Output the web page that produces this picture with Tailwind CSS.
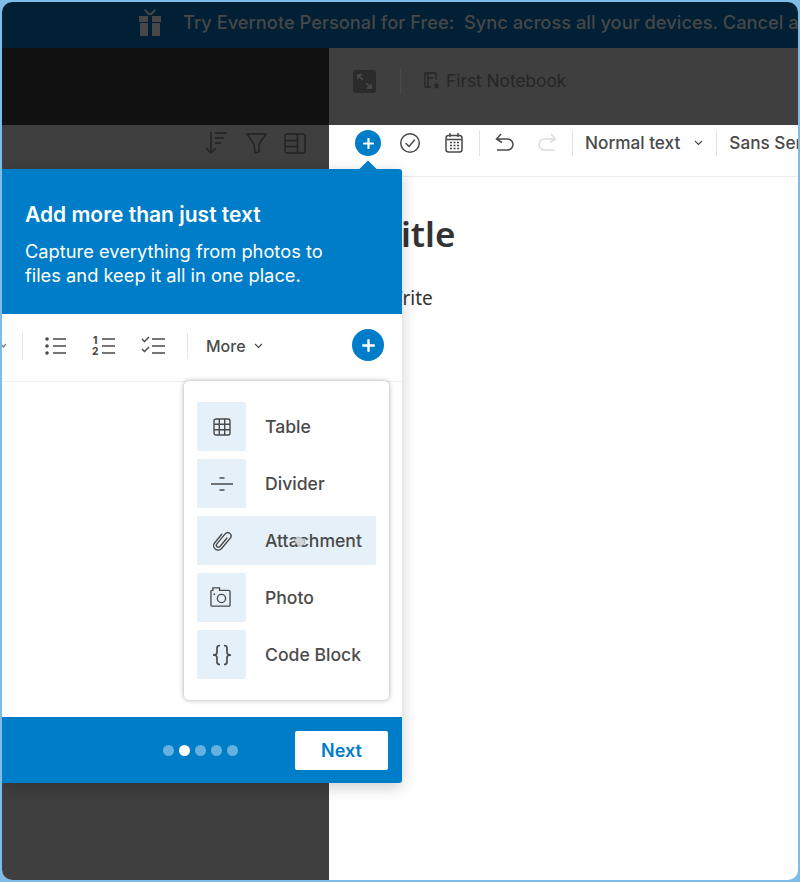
<!DOCTYPE html>
<html>
<head>
<meta charset="utf-8">
<script src="https://cdn.jsdelivr.net/npm/@tailwindcss/browser@4"></script>
</head>
<body class="bg-white">
<div class="w-[800px] h-[882px] bg-[#7fbde9] p-[2px] font-['Inter',sans-serif] overflow-hidden">
  <div class="relative w-full h-full rounded-[10px] overflow-hidden bg-white flex flex-col">
    <!-- banner -->
    <div class="h-[46px] shrink-0 bg-[#012035] flex items-center pl-[135px] pb-[4px] gap-[20px] whitespace-nowrap text-[#474747] text-[18.300px] font-medium">
      <svg class="w-[26px] h-[28px] shrink-0" viewBox="0 0 26 28" fill="#474747"><path d="M2 7h9v6H2zM15 7h9v6h-9zM3 14h8v13H4a1 1 0 0 1-1-1zM15 14h8v12a1 1 0 0 1-1 1h-7z"/><path d="M8 0l5 4.500L18 0l1 1.200L15 6h-4L7 1.200z"/></svg>
      <span class="whitespace-pre">Try Evernote Personal for Free:  Sync across all your devices. Cancel anytime.</span>
    </div>
    <div class="flex-1 flex min-h-0">
      <!-- left -->
      <div class="w-[327px] shrink-0 flex flex-col bg-[#3f3f3f]">
        <div class="h-[77px] bg-[#111111]"></div>
        <div class="h-[44px] flex items-center justify-end pr-[22px] pb-[8px] gap-[15px] text-[#232323]">
          <svg class="w-[26px] h-[26px]" viewBox="0 0 26 26" fill="none" stroke="currentColor" stroke-width="1.500"><path d="M8 2v21M3 18l5 5 5-5M12 3h12M12 8h9M12 13h6"/></svg>
          <svg class="w-[24px] h-[24px]" viewBox="0 0 24 24" fill="none" stroke="currentColor" stroke-width="1.500" stroke-linejoin="round"><path d="M3 3h19l-7 10v8l-4 1-1-9z"/></svg>
          <svg class="w-[24px] h-[24px]" viewBox="0 0 24 24" fill="none" stroke="currentColor" stroke-width="1.500"><rect x="2" y="3" width="20" height="19" rx="2"/><path d="M14.500 3v19M2 9.500h12.500M2 15.500h12.500"/></svg>
        </div>
        <div class="flex-1"></div>
      </div>
      <!-- right -->
      <div class="flex-1 flex flex-col min-w-0">
        <div class="h-[77px] bg-[#3f3f3f] flex items-center pl-[24px] pb-[11px] text-[#262626]">
          <div class="w-[23px] h-[23px] rounded-[3px] bg-[#2b2b2b] flex items-center justify-center">
            <svg class="w-[17px] h-[17px]" viewBox="0 0 17 17" fill="none" stroke="#4d4d4d" stroke-width="1.500"><path d="M2 6V2h4M2 2l5 5M15 11v4h-4M15 15l-5-5"/></svg>
          </div>
          <div class="w-px h-[26px] bg-[#4a4a4a] ml-[24px] mr-[22px]"></div>
          <svg class="w-[17px] h-[18px] mr-[6px]" viewBox="0 0 17 18" fill="none" stroke="currentColor" stroke-width="1.300"><path d="M13 8V1H2v14h6M5 1v14M5 6h5"/><path d="M13.500 10l1 2.500 2.500.2-2 1.600.7 2.500-2.200-1.400-2.200 1.400.7-2.500-2-1.600 2.500-.2z" fill="currentColor" stroke="none"/></svg>
          <span class="text-[17.300px] text-[#262626]">First Notebook</span>
        </div>
        <div class="h-[52px] shrink-0 border-b border-[#ececec] flex items-center pl-[26px] pb-[15px] whitespace-nowrap overflow-hidden text-[#4a4a4a]">
          <div class="w-[26px] h-[26px] rounded-full bg-[#007dc8] flex items-center justify-center shrink-0">
            <svg class="w-[11px] h-[11px]" viewBox="0 0 11 11" stroke="#fff" stroke-width="2.200" stroke-linecap="round"><path d="M5.500 1v9M1 5.500h9"/></svg>
          </div>
          <svg class="w-[22px] h-[22px] ml-[18px] shrink-0" viewBox="0 0 22 22" fill="none" stroke="currentColor" stroke-width="1.500"><circle cx="11" cy="11" r="9.300"/><path d="M7 11.500l3 3 5.500-6.500" stroke-linecap="round" stroke-linejoin="round"/></svg>
          <svg class="w-[20px] h-[22px] ml-[23px] shrink-0" viewBox="0 0 20 22" fill="none" stroke="currentColor" stroke-width="1.500"><rect x="2" y="3.500" width="16" height="16.500" rx="2.500"/><path d="M6 1v4M14 1v4M2 7.500h16"/><path d="M6 10.500h2M9.500 10.500h2M13 10.500h2M6 13.500h2M9.500 13.500h2M13 13.500h2M6 16.500h2M9.500 16.500h2M13 16.500h2" stroke-width="1.600"/></svg>
          <div class="w-px h-[26px] bg-[#e3e3e3] ml-[15px] mr-[14px] shrink-0"></div>
          <svg class="w-[22px] h-[22px] shrink-0" viewBox="0 0 22 22" fill="none" stroke="currentColor" stroke-width="1.500"><path d="M7 2L2.500 7 8 10.500M3 7h10.500a5.500 5.500 0 0 1 5.500 5.500v0a5.500 5.500 0 0 1-5.500 5.500H3"/></svg>
          <svg class="w-[22px] h-[22px] ml-[20px] shrink-0 text-[#dcdcdc]" viewBox="0 0 22 22" fill="none" stroke="currentColor" stroke-width="1.500"><path d="M15 2l4.500 5L14 10.500M19 7H8.500A5.500 5.500 0 0 0 3 12.500v0A5.500 5.500 0 0 0 8.500 18H19"/></svg>
          <div class="w-px h-[26px] bg-[#e3e3e3] ml-[14px] mr-[12px] shrink-0"></div>
          <span class="text-[17.200px] font-medium text-[#4a4a4a]">Normal text</span>
          <svg class="w-[9px] h-[6px] ml-[14px] shrink-0" viewBox="0 0 9 6" fill="none" stroke="currentColor" stroke-width="1.200"><path d="M1 1l3.500 3.500L8 1"/></svg>
          <div class="w-px h-[26px] bg-[#e3e3e3] ml-[13px] mr-[12px] shrink-0"></div>
          <span class="text-[17.200px] font-medium text-[#4a4a4a]">Sans Serif</span>
        </div>
        <div class="flex-1 pl-[52px] pt-[32px] font-['Noto_Sans',sans-serif] text-[#333333]">
          <div class="text-[35px] leading-[50px] font-semibold">Title</div>
          <div class="text-[19px] leading-[24px] mt-[27px] ml-[4px]">Write</div>
        </div>
      </div>
    </div>

    <!-- tutorial popover -->
    <div class="absolute left-0 top-[167px] w-[400px] h-[614px] rounded-r-[3px] flex flex-col bg-white shadow-[0_4px_16px_rgba(0,0,0,0.2)]">
      <div class="absolute left-[356px] -top-[8px] w-[20px] h-[20px] rotate-45 origin-center bg-[#007dc8] scale-[0.75]"></div>
      <div class="relative h-[145px] shrink-0 bg-[#007dc8] rounded-tr-[3px] pl-[23px] pt-[33px] text-white">
        <div class="text-[21px] leading-[26px] font-semibold">Add more than just text</div>
        <div class="text-[18.300px] leading-[24px] mt-[11px]">Capture everything from photos to<br>files and keep it all in one place.</div>
      </div>
      <div class="relative flex-1 min-h-0 bg-white">
        <div class="h-[68px] border-b border-[#f0f0f0] flex items-center pb-[3px] relative text-[#4a4a4a]">
          <svg class="w-[5px] h-[6px] -ml-[1px] shrink-0" viewBox="0 0 5 6" fill="none" stroke="#777" stroke-width="1.200"><path d="M0 1l2.500 3L5 1"/></svg>
          <div class="w-px h-[26px] bg-[#e3e3e3] ml-[16px] shrink-0"></div>
          <svg class="w-[24px] h-[22px] ml-[21px] shrink-0" viewBox="0 0 24 22" fill="none" stroke="currentColor" stroke-width="1.500"><circle cx="3" cy="4" r="1.800" fill="currentColor" stroke="none"/><circle cx="3" cy="11" r="1.800" fill="currentColor" stroke="none"/><circle cx="3" cy="18" r="1.800" fill="currentColor" stroke="none"/><path d="M9 4h13M9 11h13M9 18h13"/></svg>
          <svg class="w-[24px] h-[22px] ml-[24px] shrink-0" viewBox="0 0 24 22" fill="none" stroke="currentColor" stroke-width="1.500"><text x="1" y="9" font-size="10" font-weight="800" stroke="none" fill="currentColor">1</text><text x="0" y="20" font-size="10" font-weight="800" stroke="none" fill="currentColor">2</text><path d="M10 4h13M10 11h13M10 18h13"/></svg>
          <svg class="w-[25px] h-[22px] ml-[25px] shrink-0" viewBox="0 0 25 22" fill="none" stroke="currentColor" stroke-width="1.500"><path d="M1 4l2.500 2.500L8 2M1 14l2.500 2.500L8 12M11 4h13M11 11h13M11 18h13"/></svg>
          <div class="w-px h-[26px] bg-[#e3e3e3] ml-[21px] shrink-0"></div>
          <span class="ml-[18px] text-[16px] font-medium">More</span>
          <svg class="w-[9px] h-[6px] ml-[8px] shrink-0" viewBox="0 0 9 6" fill="none" stroke="currentColor" stroke-width="1.200"><path d="M1 1l3.500 3.500L8 1"/></svg>
          <div class="absolute left-[350px] top-[15px] w-[32px] h-[32px] rounded-full bg-[#007dc8] flex items-center justify-center">
            <svg class="w-[13px] h-[13px]" viewBox="0 0 13 13" stroke="#fff" stroke-width="2.400" stroke-linecap="round"><path d="M6.500 1.200v10.600M1.200 6.500h10.600"/></svg>
          </div>
        </div>
        <!-- insert menu -->
        <div class="absolute left-[182px] top-[67px] w-[205px] h-[319px] bg-white rounded-[5px] shadow-[0_0_5px_rgba(0,0,0,0.35)] pt-[21px] pl-[13px] pr-[13px] flex flex-col gap-[8px] text-[#4a4a4a] text-[17.600px] font-medium">
          <div class="flex items-center h-[49px]">
            <div class="w-[49px] h-[49px] rounded-[2px] bg-[#e6f0f8] flex items-center justify-center">
              <svg class="w-[18px] h-[18px]" viewBox="0 0 18 18" fill="none" stroke="currentColor" stroke-width="1.400"><rect x="1" y="1" width="16" height="16" rx="2"/><path d="M6.300 1v16M11.700 1v16M1 6.300h16M1 11.700h16"/></svg>
            </div>
            <span class="ml-[19px] mt-[1px]">Table</span>
          </div>
          <div class="flex items-center h-[49px]">
            <div class="w-[49px] h-[49px] rounded-[2px] bg-[#e6f0f8] flex items-center justify-center">
              <svg class="w-[22px] h-[16px]" viewBox="0 0 22 16" fill="none" stroke="currentColor" stroke-width="1.400"><path d="M0 8h22M8.500 2h5M8.500 14h5"/></svg>
            </div>
            <span class="ml-[19px] mt-[1px]">Divider</span>
          </div>
          <div class="flex items-center h-[49px] bg-[#e6f0f8] rounded-[2px] relative">
            <div class="w-[49px] h-[49px] flex items-center justify-center">
              <svg class="w-[26px] h-[26px]" viewBox="0 0 26 26" fill="none" stroke="currentColor" stroke-width="1.400" stroke-linecap="round"><g transform="rotate(40 13 13)"><path d="M8.500 8v11a4.500 4.500 0 0 0 9 0V5.500a3.300 3.300 0 0 0-6.600 0V18.500a2 2 0 0 0 4 0V7.500"/></g></svg>
            </div>
            <span class="ml-[19px] mt-[1px]">Attachment</span>
            <svg class="absolute left-[96px] top-[19px] w-[13px] h-[12px]" viewBox="0 0 13 12"><path d="M1 5l4-3 6 2 1 4-3 3H5z" fill="#cfd3d6" stroke="#8b8f92" stroke-width=".6"/></svg>
          </div>
          <div class="flex items-center h-[49px]">
            <div class="w-[49px] h-[49px] rounded-[2px] bg-[#e6f0f8] flex items-center justify-center">
              <svg class="w-[21px] h-[21px] -ml-[2px]" viewBox="0 0 22 22" fill="none" stroke="currentColor" stroke-width="1.400"><path d="M1 19V4.500a1 1 0 0 1 1-1h1V1h7v2.500h9.500a1.500 1.500 0 0 1 1.500 1.500V19a1 1 0 0 1-1 1H2a1 1 0 0 1-1-1z"/><circle cx="12" cy="12" r="4.300"/><circle cx="4.500" cy="7.500" r=".9" fill="currentColor" stroke="none"/></svg>
            </div>
            <span class="ml-[19px] mt-[2px]">Photo</span>
          </div>
          <div class="flex items-center h-[49px]">
            <div class="w-[49px] h-[49px] rounded-[2px] bg-[#e6f0f8] flex items-center justify-center">
              <svg class="w-[22px] h-[22px]" viewBox="0 0 22 22" fill="none" stroke="currentColor" stroke-width="1.700"><path d="M9 1.500c-2.200 0-3 .8-3 2.500v4.500C6 10 5 11 2 11c3 0 4 1 4 2.500V18c0 1.700.8 2.500 3 2.500M13 1.500c2.200 0 3 .8 3 2.500v4.500c0 1.500 1 2.500 4 2.500-3 0-4 1-4 2.500V18c0 1.700-.8 2.500-3 2.500"/></svg>
            </div>
            <span class="ml-[19px] mt-[2px]">Code Block</span>
          </div>
        </div>
      </div>
      <div class="h-[66px] shrink-0 bg-[#007dc8] rounded-br-[3px] flex items-center justify-end pr-[14px]">
        <div class="flex gap-[5px] mr-[57px]">
          <span class="w-[11px] h-[11px] rounded-full bg-[#66b1de]"></span>
          <span class="w-[11px] h-[11px] rounded-full bg-white"></span>
          <span class="w-[11px] h-[11px] rounded-full bg-[#66b1de]"></span>
          <span class="w-[11px] h-[11px] rounded-full bg-[#66b1de]"></span>
          <span class="w-[11px] h-[11px] rounded-full bg-[#66b1de]"></span>
        </div>
        <div class="w-[93px] h-[39px] bg-white rounded-[2px] flex items-center justify-center text-[#007dc8] text-[18px] font-semibold">Next</div>
      </div>
    </div>
  </div>
</div>
</body>
</html>
